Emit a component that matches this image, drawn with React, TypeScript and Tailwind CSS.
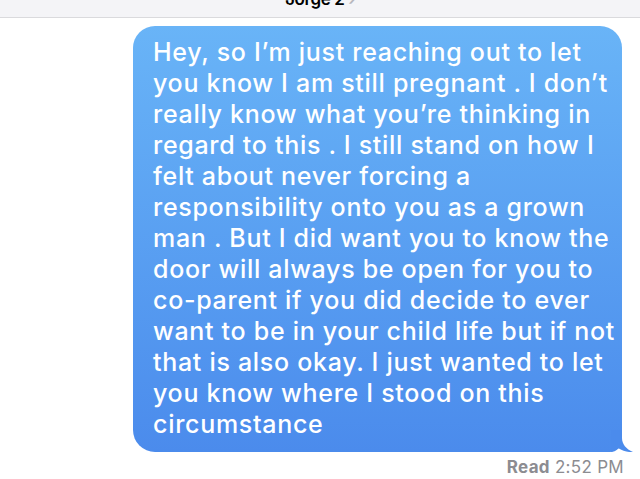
const lines = [
  'Hey, so I’m just reaching out to let',
  'you know I am still pregnant . I don’t',
  'really know what you’re thinking in',
  'regard to this . I still stand on how I',
  'felt about never forcing a',
  'responsibility onto you as a grown',
  'man . But I did want you to know the',
  'door will always be open for you to',
  'co-parent if you did decide to ever',
  'want to be in your child life but if not',
  'that is also okay. I just wanted to let',
  'you know where I stood on this',
  'circumstance',
];

export default function App() {
  return (
    <div className="w-[640px] h-[479px] bg-white overflow-hidden font-['Inter',sans-serif]">
      <div className="h-[18px] bg-[#f4f4f7] border-b border-[#dadadd] overflow-hidden flex justify-center">
        <span className="-mt-[13px] text-[17px] font-semibold text-black tracking-tight">
          Jorge 2 <span className="text-[#b8b8bd]">›</span>
        </span>
      </div>

      <div className="relative ml-[133px] mt-[8px] w-[489px] rounded-[22px] rounded-br-[12px] bg-linear-to-b from-[#69b4f7] to-[#4b8bec] pl-[20px] pt-[11px] pb-[12px] text-white text-[25px] leading-[31px] tracking-[0.7px] font-medium">
        {lines.map((line, i) => (
          <div key={i} className="whitespace-nowrap">{line}</div>
        ))}
        <svg className="absolute -right-[11px] bottom-0" width="22" height="22" viewBox="0 0 22 22">
          <path d="M0 0 L11 0 L11 8 C11 14 15 19 22 22 C17 22.5 12 21 7 18 C5 20 2 21.5 0 22 Z" fill="#4b8bec" />
        </svg>
      </div>

      <div className="mt-[7px] pr-[16px] text-right text-[17px] leading-none tracking-[0.3px] text-[#8c8c91]">
        <span className="font-bold">Read</span> 2:52 PM
      </div>
    </div>
  );
}
